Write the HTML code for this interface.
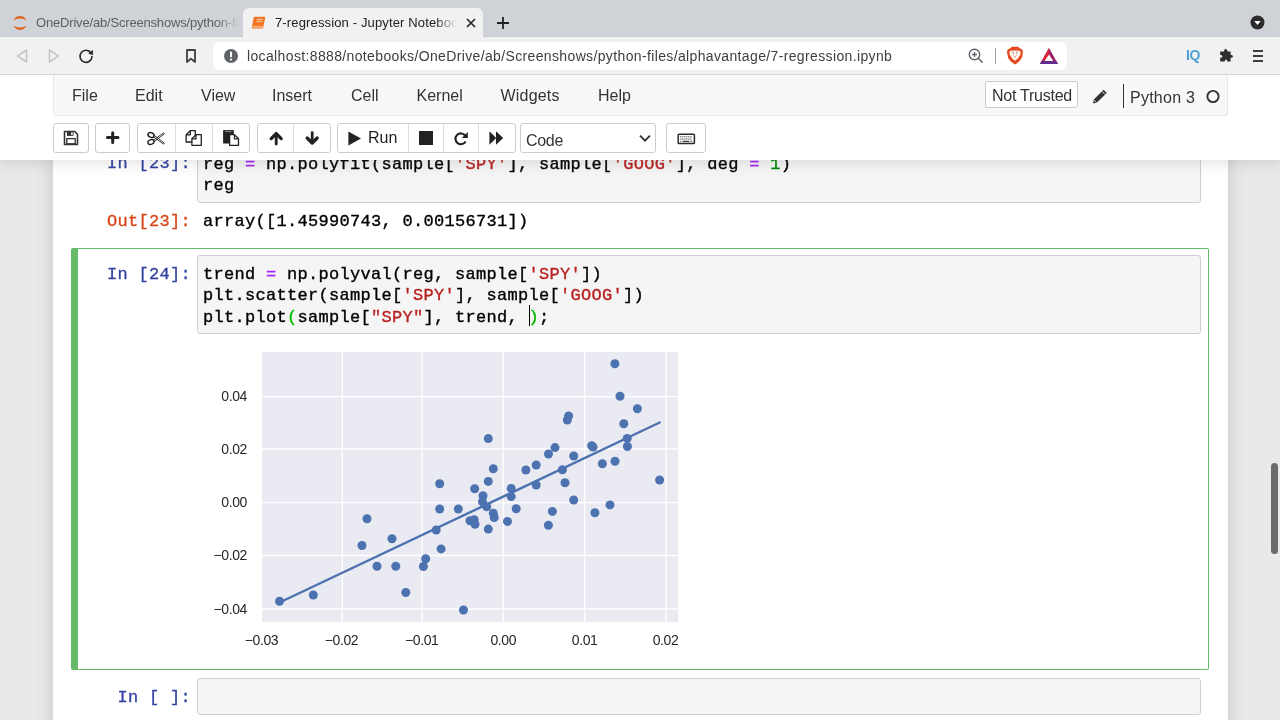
<!DOCTYPE html>
<html><head><meta charset="utf-8">
<style>
*{box-sizing:border-box;margin:0;padding:0}
html,body{width:1280px;height:720px;overflow:hidden;background:#e9e9e9;font-family:"Liberation Sans",sans-serif;position:relative}
.abs{position:absolute}
body{will-change:transform}
#tabstrip{left:0;top:0;width:1280px;height:37px;background:#cfd3d8;border-bottom:1px solid #c6c9ce}
#toolbar{left:0;top:37px;width:1280px;height:38px;background:#f1f1f1;border-bottom:1px solid #d6d6d6}
.tab{position:absolute;top:8px;height:29px;background:#f1f1f1;border-radius:6px 6px 0 0}
.tabtxt{position:absolute;font-size:13px;white-space:nowrap;overflow:hidden;line-height:14px}
#omni{left:213px;top:42px;width:854px;height:28px;background:#fff;border-radius:6px}
#header{left:0;top:75px;width:1280px;height:85px;background:#fff;box-shadow:0 0 15px 1px rgba(87,87,87,0.22);clip-path:inset(0 -40px -40px -40px)}
#menubar{left:53px;top:75px;width:1175px;height:41px;background:#f8f8f8;border:1px solid #e7e7e7;border-top:none;border-radius:0 0 3px 3px}
.menu{position:absolute;top:87px;font-size:16px;color:#333;line-height:18px}
.btn{position:absolute;top:123px;height:30px;background:#fff;border:1px solid #ccc;border-radius:3px}
.div{position:absolute;top:0;width:1px;height:100%;background:#ddd}
#nb{left:53px;top:100px;width:1175px;height:660px;background:#fff;box-shadow:0 0 15px 1px rgba(87,87,87,0.22)}
.inbox{position:absolute;background:#f5f5f5;border:1px solid #cfcfcf;border-radius:3px}
.code{position:absolute;font-family:"Liberation Mono",monospace;font-size:17px;letter-spacing:0.3px;-webkit-text-stroke:0.35px currentColor;line-height:21.25px;white-space:pre;color:#000}
.prompt{position:absolute;font-family:"Liberation Mono",monospace;font-size:17px;letter-spacing:0.3px;-webkit-text-stroke:0.3px currentColor;line-height:21px;white-space:pre;color:#303f9f}
.kw{color:#a0a}
.str{color:#ba2121}
.num{color:#080}
.op{color:#a2f}
</style></head><body>
<div id="tabstrip" class="abs"></div>
<div id="toolbar" class="abs"></div>
<div class="tab" style="left:243px;width:240px"></div>

<!-- inactive tab -->
<svg class="abs" style="left:12px;top:15px" width="16" height="16" viewBox="0 0 16 16">
 <path d="M1.6 5.2 A7 7 0 0 1 14.4 5.2 Q8 1.6 1.6 5.2Z" fill="#e0692a"/>
 <path d="M1.6 10.8 A7 7 0 0 0 14.4 10.8 Q8 14.4 1.6 10.8Z" fill="#e0692a"/>
</svg>
<div class="tabtxt" style="left:36px;top:16px;width:204px;letter-spacing:-0.18px;color:#5b5f64;-webkit-mask-image:linear-gradient(to right,#000 180px,transparent 204px)">OneDrive/ab/Screenshows/python-files/alphavantage</div>
<!-- active tab -->
<svg class="abs" style="left:251px;top:16px" width="15" height="14" viewBox="0 0 15 14">
 <path d="M3.4 0.8 H13.4 Q14.4 0.8 14.2 1.8 L12.2 11.6 Q12 12.6 11 12.6 H1.6 Q0.6 12.6 0.8 11.6 L2.6 1.8 Q2.8 0.8 3.4 0.8Z" fill="#f37726"/>
 <path d="M1.6 10.9 H11.6" stroke="#fde0c8" stroke-width="1"/>
 <path d="M5.8 3.4 H11.6 M5.4 5.4 H11.2" stroke="#fbd3b5" stroke-width="1"/>
</svg>
<div class="tabtxt" style="left:275px;top:16px;width:182px;letter-spacing:0.14px;color:#202124;-webkit-mask-image:linear-gradient(to right,#000 160px,transparent 182px)">7-regression - Jupyter Notebook</div>
<svg class="abs" style="left:466px;top:18px" width="10" height="10" viewBox="0 0 10 10"><path d="M1 1L9 9M9 1L1 9" stroke="#202124" stroke-width="1.6"/></svg>
<svg class="abs" style="left:496px;top:16px" width="14" height="14" viewBox="0 0 14 14"><path d="M7 1V13M1 7H13" stroke="#202124" stroke-width="1.8"/></svg>
<!-- tab strip dropdown -->
<svg class="abs" style="left:1250px;top:15px" width="15" height="15" viewBox="0 0 15 15"><circle cx="7.5" cy="7.5" r="7" fill="#2b2b2b"/><path d="M4.3 6 H10.7 L7.5 10Z" fill="#fff"/></svg>
<!-- toolbar icons -->
<svg class="abs" style="left:16px;top:49px" width="12" height="14" viewBox="0 0 12 14"><path d="M10.5 1.2 L1.5 7 L10.5 12.8Z" fill="none" stroke="#bdbfc2" stroke-width="1.4" stroke-linejoin="round"/></svg>
<svg class="abs" style="left:48px;top:49px" width="12" height="14" viewBox="0 0 12 14"><path d="M1.5 1.2 L10.5 7 L1.5 12.8Z" fill="none" stroke="#bdbfc2" stroke-width="1.4" stroke-linejoin="round"/></svg>
<svg class="abs" style="left:78px;top:48px" width="16" height="16" viewBox="0 0 16 16"><path d="M13 5 A6 6 0 1 0 14 8.5" fill="none" stroke="#2a2a2a" stroke-width="1.6" stroke-linecap="round"/><path d="M14.6 2.6 L14.6 6.6 L10.8 5.4Z" fill="#2a2a2a" stroke="#2a2a2a" stroke-width="0.8" stroke-linejoin="round"/></svg>
<svg class="abs" style="left:185px;top:48px" width="12" height="16" viewBox="0 0 12 16"><path d="M2 2 H10 V14 L6 10.6 L2 14Z" fill="none" stroke="#3c4043" stroke-width="1.8" stroke-linejoin="round"/></svg>
<div id="omni" class="abs"></div>
<svg class="abs" style="left:223px;top:48px" width="16" height="16" viewBox="0 0 16 16"><circle cx="8" cy="8" r="7" fill="#5f6368"/><rect x="7" y="3.6" width="2" height="5.6" rx="0.8" fill="#fff"/><circle cx="8" cy="11.6" r="1.1" fill="#fff"/></svg>
<div class="abs" style="left:247px;top:48px;font-size:14px;line-height:17px;letter-spacing:0.36px;color:#3c4043;white-space:nowrap">localhost:8888/notebooks/OneDrive/ab/Screenshows/python-files/alphavantage/7-regression.ipynb</div>
<svg class="abs" style="left:968px;top:48px" width="16" height="16" viewBox="0 0 16 16"><circle cx="6.5" cy="6.5" r="5.2" fill="none" stroke="#5f6368" stroke-width="1.4"/><path d="M10.3 10.3 L14.6 14.6" stroke="#5f6368" stroke-width="1.5"/><path d="M6.5 4 V9 M4 6.5 H9" stroke="#5f6368" stroke-width="1.3"/></svg>
<div class="abs" style="left:995px;top:48px;width:1px;height:16px;background:#9aa0a6"></div>
<svg class="abs" style="left:1006px;top:46px" width="18" height="19" viewBox="0 0 18 19">
 <path d="M5.8 0.8 H12.2 L13.6 2.2 L16.4 3.4 L17 6 L16 11.5 Q14.5 15 9 18.6 Q3.5 15 2 11.5 L1 6 L1.6 3.4 L4.4 2.2Z" fill="#e4481f"/>
 <path d="M3.4 5.6 L5.8 4.6 H12.2 L14.6 5.6 L14.2 9 L11.8 12.4 L9 14.8 L6.2 12.4 L3.8 9Z" fill="#fff6f2"/>
 <rect x="6.4" y="5.6" width="1.5" height="1" fill="#a06050"/><rect x="10.1" y="5.6" width="1.5" height="1" fill="#a06050"/>
 <path d="M7.4 7 L7.6 9.6 M10.6 7 L10.4 9.6" stroke="#e8b8a8" stroke-width="0.8"/>
 <path d="M8 10.6 H10 L9 11.8Z" fill="#c85040"/>
</svg>
<svg class="abs" style="left:1039px;top:47px" width="20" height="18" viewBox="0 0 20 18">
 <path d="M10 1 L19 17 H1Z" fill="#9e1f63"/>
 <path d="M10 1 L1 17 H4.8 L10 7.4Z" fill="#e0243b"/>
 <path d="M1 17 H19 L17 13.6 H3Z" fill="#662d91"/>
 <path d="M10 7.4 L14.3 14 H5.7Z" fill="#fff"/>
</svg>
<div class="abs" style="left:1186px;top:47px;font-size:14px;font-weight:bold;color:#4f9fd6;line-height:16px;letter-spacing:-0.3px">IQ</div>
<svg class="abs" style="left:1218px;top:48px" width="16" height="16" viewBox="0 0 16 16"><path d="M6.6 1.2 Q8.4 0.6 9.2 2.2 L9.6 3.6 H12.6 V7 Q14.6 6.6 15 8.4 Q14.8 10.2 12.6 9.8 V13.6 H9.2 Q9.6 11.6 8 11.4 Q6.4 11.6 6.8 13.6 H2.2 V9.6 Q4.2 10.2 4.4 8.4 Q4.2 6.6 2.2 7 V3.6 H6 Z" fill="#2d2d2d"/></svg>
<svg class="abs" style="left:1252px;top:49px" width="12" height="14" viewBox="0 0 12 14"><path d="M1 2 H11 M1 7 H11 M1 12 H11" stroke="#3c4043" stroke-width="1.8"/></svg>

<div id="nb" class="abs"></div>
<div class="abs" style="left:1271px;top:463px;width:7px;height:91px;background:#6b6b6b;border-radius:4px"></div>
<!-- cell 23 -->
<div class="inbox" style="left:197px;top:120px;width:1004px;height:83px"></div>
<div class="prompt" style="left:107px;top:153px">In [23]:</div>
<div class="code" style="left:203px;top:154px">reg <span class="op">=</span> np.polyfit(sample[<span class="str">'SPY'</span>], sample[<span class="str">'GOOG'</span>], deg <span class="op">=</span> <span class="num">1</span>)
reg</div>
<div class="prompt" style="left:107px;top:211px;color:#d84315">Out[23]:</div>
<div class="code" style="left:203px;top:211px">array([1.45990743, 0.00156731])</div>
<!-- cell 24 selected -->
<div class="abs" style="left:71px;top:248px;width:1138px;height:422px;border:1px solid #66bb6a;border-left:7px solid #66bb6a;border-radius:2px"></div>
<div class="inbox" style="left:197px;top:255px;width:1004px;height:79px"></div>
<div class="prompt" style="left:107px;top:264px">In [24]:</div>
<div class="code" style="left:203px;top:264px">trend <span class="op">=</span> np.polyval(reg, sample[<span class="str">'SPY'</span>])
plt.scatter(sample[<span class="str">'SPY'</span>], sample[<span class="str">'GOOG'</span>])
plt.plot<span style="color:#0b0">(</span>sample[<span class="str">"SPY"</span>], trend, <span style="color:#0b0">)</span>;</div>
<div class="abs" style="left:529px;top:305px;width:1.3px;height:21px;background:#000"></div>
<svg class="abs" style="left:200px;top:340px" width="500" height="320" viewBox="0 0 500 320">
<rect x="62" y="12" width="416" height="270" fill="#eaeaf2"/>
<g stroke="#fff" stroke-width="1.3" fill="none"><path d="M142.3 12V282"/><path d="M222.2 12V282"/><path d="M303.3 12V282"/><path d="M384.6 12V282"/><path d="M466.2 12V282"/><path d="M62 56.7H478"/><path d="M62 109.0H478"/><path d="M62 162.7H478"/><path d="M62 215.5H478"/><path d="M62 269.0H478"/></g>
<path d="M79.5 262.5 L459.7 82.5" stroke="#4c72b0" stroke-width="2.4" stroke-linecap="round"/>
<g fill="#4c72b0"><circle cx="414.9" cy="23.8" r="4.5"/><circle cx="420.0" cy="56.2" r="4.5"/><circle cx="437.4" cy="68.8" r="4.5"/><circle cx="368.6" cy="75.9" r="4.5"/><circle cx="367.3" cy="80.0" r="4.5"/><circle cx="423.8" cy="83.8" r="4.5"/><circle cx="288.3" cy="98.6" r="4.5"/><circle cx="427.2" cy="98.4" r="4.5"/><circle cx="427.4" cy="106.5" r="4.5"/><circle cx="391.7" cy="105.8" r="4.5"/><circle cx="393.0" cy="107.0" r="4.5"/><circle cx="355.0" cy="107.6" r="4.5"/><circle cx="348.5" cy="114.0" r="4.5"/><circle cx="373.7" cy="116.0" r="4.5"/><circle cx="415.0" cy="121.3" r="4.5"/><circle cx="402.4" cy="123.8" r="4.5"/><circle cx="336.2" cy="125.0" r="4.5"/><circle cx="325.9" cy="130.0" r="4.5"/><circle cx="362.4" cy="129.8" r="4.5"/><circle cx="459.6" cy="140.0" r="4.5"/><circle cx="293.3" cy="128.8" r="4.5"/><circle cx="288.3" cy="141.4" r="4.5"/><circle cx="365.0" cy="142.8" r="4.5"/><circle cx="336.2" cy="145.0" r="4.5"/><circle cx="239.7" cy="143.8" r="4.5"/><circle cx="274.7" cy="148.8" r="4.5"/><circle cx="311.2" cy="148.4" r="4.5"/><circle cx="283.0" cy="155.8" r="4.5"/><circle cx="311.2" cy="156.6" r="4.5"/><circle cx="373.7" cy="160.0" r="4.5"/><circle cx="410.0" cy="164.9" r="4.5"/><circle cx="239.7" cy="169.0" r="4.5"/><circle cx="258.3" cy="169.0" r="4.5"/><circle cx="282.5" cy="161.7" r="4.5"/><circle cx="286.7" cy="166.7" r="4.5"/><circle cx="316.2" cy="168.8" r="4.5"/><circle cx="352.4" cy="171.4" r="4.5"/><circle cx="394.9" cy="172.7" r="4.5"/><circle cx="293.3" cy="173.3" r="4.5"/><circle cx="294.2" cy="177.5" r="4.5"/><circle cx="270.0" cy="180.8" r="4.5"/><circle cx="274.2" cy="179.7" r="4.5"/><circle cx="275.0" cy="184.2" r="4.5"/><circle cx="307.5" cy="181.4" r="4.5"/><circle cx="348.4" cy="185.2" r="4.5"/><circle cx="288.3" cy="189.1" r="4.5"/><circle cx="236.2" cy="190.0" r="4.5"/><circle cx="241.1" cy="208.9" r="4.5"/><circle cx="225.7" cy="218.8" r="4.5"/><circle cx="223.4" cy="226.5" r="4.5"/><circle cx="263.5" cy="270.0" r="4.5"/><circle cx="167.0" cy="178.7" r="4.5"/><circle cx="162.0" cy="205.5" r="4.5"/><circle cx="192.0" cy="198.7" r="4.5"/><circle cx="177.0" cy="226.2" r="4.5"/><circle cx="195.8" cy="226.2" r="4.5"/><circle cx="205.8" cy="252.5" r="4.5"/><circle cx="79.5" cy="261.3" r="4.5"/><circle cx="113.3" cy="255.0" r="4.5"/></g>
<g font-family="Liberation Sans" font-size="14" letter-spacing="-0.4" fill="#262626"><text x="47" y="61.4" text-anchor="end">0.04</text><text x="47" y="113.7" text-anchor="end">0.02</text><text x="47" y="167.4" text-anchor="end">0.00</text><text x="47" y="220.2" text-anchor="end">−0.02</text><text x="47" y="273.7" text-anchor="end">−0.04</text><text x="61.5" y="305" text-anchor="middle">−0.03</text><text x="141.5" y="305" text-anchor="middle">−0.02</text><text x="221.8" y="305" text-anchor="middle">−0.01</text><text x="303.3" y="305" text-anchor="middle">0.00</text><text x="384.6" y="305" text-anchor="middle">0.01</text><text x="465.5" y="305" text-anchor="middle">0.02</text></g>
</svg>
<!-- bottom cell -->
<div class="inbox" style="left:197px;top:678px;width:1004px;height:37px"></div>
<div class="prompt" style="left:117.5px;top:687px">In [ ]:</div>
<div id="header" class="abs"></div>
<div id="menubar" class="abs"></div>
<div class="menu" style="left:72px">File</div>
<div class="menu" style="left:135px">Edit</div>
<div class="menu" style="left:201px">View</div>
<div class="menu" style="left:272px">Insert</div>
<div class="menu" style="left:351px">Cell</div>
<div class="menu" style="left:416.5px">Kernel</div>
<div class="menu" style="left:500.5px;letter-spacing:0.2px">Widgets</div>
<div class="menu" style="left:598px">Help</div>
<div class="abs" style="left:985px;top:81px;width:93px;height:27px;border:1px solid #ccc;background:#fff;border-radius:2px"></div>
<div class="menu" style="left:992px;top:87px;letter-spacing:-0.25px">Not Trusted</div>
<svg class="abs" style="left:1092px;top:89px" width="16" height="15" viewBox="0 0 16 15"><path d="M11.6 0.8 L14.8 4 L5 13.6 L1 14.4 L1.8 10.4Z" fill="#333"/><path d="M10 2.4 L13.2 5.6" stroke="#f8f8f8" stroke-width="0.9"/><path d="M1.9 11 L4.4 13.5" stroke="#f8f8f8" stroke-width="0.8"/></svg>
<div class="abs" style="left:1123px;top:84px;width:1px;height:24px;background:#333"></div>
<div class="menu" style="left:1130px;top:88.5px;letter-spacing:0.25px">Python 3</div>
<svg class="abs" style="left:1205px;top:89px" width="16" height="15" viewBox="0 0 16 15"><circle cx="8" cy="7.5" r="5.6" fill="none" stroke="#333" stroke-width="1.9"/></svg>
<!-- toolbar -->
<div class="btn" style="left:53px;width:36px"></div>
<svg class="abs" style="left:63px;top:130px" width="16" height="16" viewBox="0 0 16 16"><path d="M1.5 1.5 H11.8 L14.5 4.2 V14.5 H1.5Z" fill="none" stroke="#333" stroke-width="1.6" stroke-linejoin="round"/><rect x="4" y="1.5" width="6.4" height="4.4" fill="#333"/><rect x="8.2" y="2.3" width="1.4" height="2.8" fill="#fff"/><rect x="3.8" y="8.6" width="8.4" height="5.2" fill="none" stroke="#333" stroke-width="1.3"/></svg>
<div class="btn" style="left:95px;width:35px"></div>
<svg class="abs" style="left:105px;top:131px" width="15" height="14" viewBox="0 0 15 14"><path d="M7.7 1.8 V11.4 M2.4 6.6 H13" stroke="#222" stroke-width="3" stroke-linecap="round"/></svg>
<div class="btn" style="left:137px;width:113px"><div class="div" style="left:37px"></div><div class="div" style="left:74px"></div></div>
<svg class="abs" style="left:146px;top:131px" width="19" height="15" viewBox="0 0 19 15">
<path d="M7.4 9.2 L17.4 2 Q18.6 2 18 3.2 L8.2 10.6Z M7.4 5.8 L17.4 13 Q18.6 13 18 11.8 L8.2 4.4Z" fill="#fff" stroke="#222" stroke-width="0.9" stroke-linejoin="round"/>
<ellipse cx="5" cy="4" rx="3.1" ry="2.3" transform="rotate(22 5 4)" fill="none" stroke="#222" stroke-width="1.5"/>
<ellipse cx="5" cy="11" rx="3.1" ry="2.3" transform="rotate(-22 5 11)" fill="none" stroke="#222" stroke-width="1.5"/>
</svg>
<svg class="abs" style="left:183px;top:128px" width="20" height="20" viewBox="0 0 20 20" fill="#fff" stroke="#222" stroke-width="1.3" stroke-linejoin="round">
<path d="M7.3 2.7 H12.3 V14.0 H3.1 V6.8Z"/>
<path d="M3.1 6.8 L7.3 6.8 L7.3 2.7" fill="none"/>
<path d="M13.0 6.7 H18.3 V17.3 H8.9 V10.8Z"/>
<path d="M8.9 10.8 L13.0 10.8 L13.0 6.7" fill="none"/>
</svg>
<svg class="abs" style="left:221px;top:128px" width="20" height="20" viewBox="0 0 20 20">
<rect x="2.1" y="2.1" width="10.7" height="13.4" fill="#222"/>
<rect x="4.0" y="3.2" width="6.6" height="0.9" fill="#999"/>
<path d="M8.6 6.7 H13.4 L17.5 10.8 V17.3 H8.6Z" fill="#fff" stroke="#222" stroke-width="1.3" stroke-linejoin="round"/>
<path d="M13.4 6.7 V10.8 H17.5" fill="none" stroke="#222" stroke-width="1.2"/>
</svg>
<div class="btn" style="left:257px;width:74px"><div class="div" style="left:35px"></div></div>
<svg class="abs" style="left:268px;top:131px" width="16" height="15" viewBox="0 0 16 15"><path d="M8.2 13 V3" fill="none" stroke="#222" stroke-width="2.8" stroke-linecap="round"/><path d="M3.2 7.6 L8.2 2.6 L13.2 7.6" fill="none" stroke="#222" stroke-width="3.3" stroke-linecap="round" stroke-linejoin="round"/></svg>
<svg class="abs" style="left:304px;top:131px" width="16" height="15" viewBox="0 0 16 15"><path d="M8.2 1.6 V11.6" fill="none" stroke="#222" stroke-width="2.8" stroke-linecap="round"/><path d="M3.2 7 L8.2 12 L13.2 7" fill="none" stroke="#222" stroke-width="3.3" stroke-linecap="round" stroke-linejoin="round"/></svg>
<div class="btn" style="left:337px;width:179px"><div class="div" style="left:70px"></div><div class="div" style="left:105px"></div><div class="div" style="left:140px"></div></div>
<svg class="abs" style="left:348px;top:131px" width="14" height="15" viewBox="0 0 14 15"><path d="M0.4 0.6 L13 7.5 L0.4 14.4Z" fill="#222"/></svg>
<div class="menu" style="left:368px;top:129px;color:#222">Run</div>
<div class="abs" style="left:419px;top:131px;width:14px;height:14px;background:#222"></div>
<svg class="abs" style="left:453px;top:131px" width="16" height="15" viewBox="0 0 16 15"><path d="M12.2 4.6 A5.4 5.4 0 1 0 12.6 10.4" fill="none" stroke="#222" stroke-width="2.1"/><path d="M14.8 1 V7 H8.8Z" fill="#222"/></svg>
<svg class="abs" style="left:489px;top:131px" width="15" height="14" viewBox="0 0 15 14"><path d="M0.4 0.2 L7.2 7 L0.4 13.8Z M7.0 0.2 L14.2 7 L7.0 13.8Z" fill="#222"/></svg>
<div class="abs" style="left:520px;top:123px;width:136px;height:30px;border:1px solid #ccc;border-radius:3px;background:#fff"></div>
<div class="menu" style="left:526px;top:131.5px;color:#333;letter-spacing:-0.3px">Code</div>
<svg class="abs" style="left:639px;top:134px" width="12" height="9" viewBox="0 0 12 9"><path d="M1 1.6 L6 6.6 L11 1.6" fill="none" stroke="#333" stroke-width="1.9"/></svg>
<div class="btn" style="left:666px;width:40px"></div>
<svg class="abs" style="left:677px;top:133px" width="19" height="12" viewBox="0 0 19 12"><rect x="1.2" y="1.2" width="16.2" height="9.4" rx="0.8" fill="#fff" stroke="#2a2a2a" stroke-width="1.5"/><path d="M3.3 3.8 H15.3 M3.3 6 H15.3" stroke="#333" stroke-width="1.1" stroke-dasharray="1.1 0.9"/><path d="M5.6 8.4 H12.4" stroke="#444" stroke-width="1.4"/><path d="M3.3 8.4 H4.4 M13.6 8.4 H15.3" stroke="#666" stroke-width="1.1"/></svg>

</body></html>
